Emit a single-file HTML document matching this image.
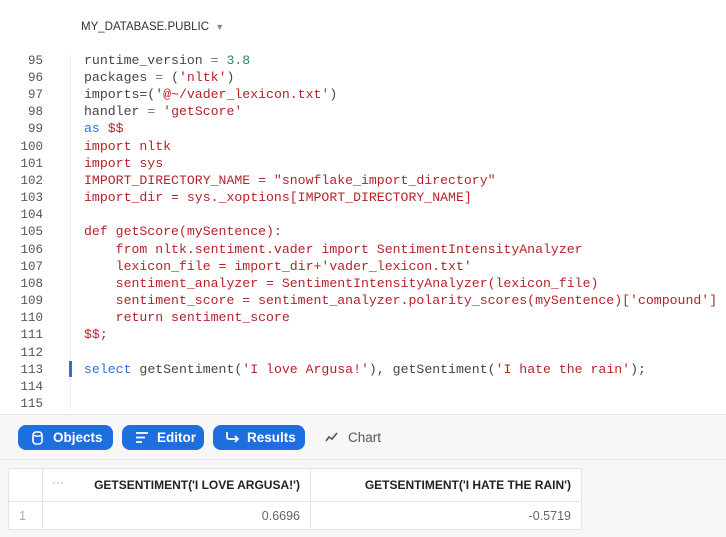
<!DOCTYPE html><html><head><style>
body{margin:0;width:726px;height:536px;background:#fff;font-family:"Liberation Sans",sans-serif;position:relative;overflow:hidden}
.hdr{position:absolute;left:81px;top:21px;font-size:11.5px;color:#333}
.code{position:absolute;left:0;top:53px;font-family:"Liberation Mono",monospace;font-size:13.2px}
.ln{position:absolute;width:43px;text-align:right;color:#555;font-size:12.5px}
.l{position:absolute;left:84px;white-space:pre;color:#b5232a}
.g{color:#444}.b{color:#2f6fd6}.s{color:#c8262c}.n{color:#2a8a5a}.o{color:#777}
.gut{position:absolute;left:70px;top:55px;height:355px;border-left:1px solid #eee}
.tb{position:absolute;left:0;top:414px;width:726px;height:122px;background:#f7f7f7;border-top:1px solid #e6e6e6}
.sep{position:absolute;left:0;top:459px;width:726px;border-top:1px solid #e8e8e8}
.btn{position:absolute;top:425px;height:25px;background:#1d6fe0;border-radius:8px;color:#fff;font-weight:bold;font-size:13.5px;line-height:25px;box-sizing:border-box}
.btn svg{position:absolute;top:6px}
table{position:absolute;left:8px;top:468px;border-collapse:collapse;background:#fff;font-size:12px}
td{border:1px solid #e4e4e4;padding:0 10px;text-align:right}
</style></head><body>
<div class="hdr">MY_DATABASE.PUBLIC <span style="color:#888;font-size:9px;margin-left:3px">▼</span></div>
<div class="gut"></div>
<div style="position:absolute;left:69px;top:361px;width:3px;height:16px;background:#2f6fd6"></div>
<div class="code">
<div class="ln" style="top:1px">95</div><div class="l" style="top:0"><span class="g">runtime_version</span> <span class="o">=</span> <span class="n">3.8</span></div>
<div class="ln" style="top:18px">96</div><div class="l" style="top:17px"><span class="g">packages</span> <span class="o">=</span> <span class="g">(</span>'nltk'<span class="g">)</span></div>
<div class="ln" style="top:35px">97</div><div class="l" style="top:34px"><span class="g">imports=(</span>'@~/vader_lexicon.txt'<span class="g">)</span></div>
<div class="ln" style="top:52px">98</div><div class="l" style="top:51px"><span class="g">handler</span> <span class="o">=</span> 'getScore'</div>
<div class="ln" style="top:69px">99</div><div class="l" style="top:68px"><span class="b">as</span> $$</div>
<div class="ln" style="top:87px">100</div><div class="l" style="top:86px">import nltk</div>
<div class="ln" style="top:104px">101</div><div class="l" style="top:103px">import sys</div>
<div class="ln" style="top:121px">102</div><div class="l" style="top:120px">IMPORT_DIRECTORY_NAME = "snowflake_import_directory"</div>
<div class="ln" style="top:138px">103</div><div class="l" style="top:137px">import_dir = sys._xoptions[IMPORT_DIRECTORY_NAME]</div>
<div class="ln" style="top:155px">104</div>
<div class="ln" style="top:172px">105</div><div class="l" style="top:171px">def getScore(mySentence):</div>
<div class="ln" style="top:190px">106</div><div class="l" style="top:189px">    from nltk.sentiment.vader import SentimentIntensityAnalyzer</div>
<div class="ln" style="top:207px">107</div><div class="l" style="top:206px">    lexicon_file = import_dir+'vader_lexicon.txt'</div>
<div class="ln" style="top:224px">108</div><div class="l" style="top:223px">    sentiment_analyzer = SentimentIntensityAnalyzer(lexicon_file)</div>
<div class="ln" style="top:241px">109</div><div class="l" style="top:240px">    sentiment_score = sentiment_analyzer.polarity_scores(mySentence)['compound']</div>
<div class="ln" style="top:258px">110</div><div class="l" style="top:257px">    return sentiment_score</div>
<div class="ln" style="top:275px">111</div><div class="l" style="top:274px">$$;</div>
<div class="ln" style="top:293px">112</div>
<div class="ln" style="top:310px">113</div><div class="l" style="top:309px"><span class="b">select</span> <span class="g">getSentiment(</span>'I love Argusa!'<span class="g">), getSentiment(</span>'I hate the rain'<span class="g">);</span></div>
<div class="ln" style="top:327px">114</div>
<div class="ln" style="top:344px">115</div>
</div>
<div class="tb"></div><div class="sep"></div>
<div class="btn" style="left:18px;width:95px;padding-left:35px"><svg style="left:14px" width="11" height="14" viewBox="0 0 11 14"><rect x="1" y="1" width="9" height="12" rx="3" fill="none" stroke="#fff" stroke-width="1.6"/><path d="M1 4Q5.5 6.5 10 4" fill="none" stroke="#fff" stroke-width="1.4"/></svg>Objects</div>
<div class="btn" style="left:122px;width:82px;padding-left:35px"><svg style="left:13px" width="14" height="13" viewBox="0 0 14 13"><path d="M1 2H13M1 6.5H10M1 11H7" stroke="#fff" stroke-width="1.7"/></svg>Editor</div>
<div class="btn" style="left:213px;width:92px;padding-left:34px"><svg style="left:12px" width="15" height="13" viewBox="0 0 15 13"><path d="M2 1V6Q2 8 4 8H13M10 5L13 8L10 11" fill="none" stroke="#fff" stroke-width="1.7"/></svg>Results</div>
<svg style="position:absolute;left:325px;top:432px" width="13" height="10" viewBox="0 0 13 10"><path d="M1 9L4 5L7 7L12 1" fill="none" stroke="#555" stroke-width="1.6"/></svg>
<div style="position:absolute;left:348px;top:430px;font-size:13.5px;color:#555">Chart</div>
<table>
<tr style="height:33px"><td style="width:13px"></td><td style="width:247px;font-weight:bold;color:#222;position:relative"><span style="position:absolute;left:9px;top:6px;color:#999;font-weight:normal">···</span>GETSENTIMENT('I LOVE ARGUSA!')</td><td style="width:250px;font-weight:bold;color:#222">GETSENTIMENT('I HATE THE RAIN')</td></tr>
<tr style="height:28px;color:#666;font-size:12.5px"><td style="text-align:left;color:#aaa">1</td><td>0.6696</td><td>-0.5719</td></tr>
</table>
</body></html>
